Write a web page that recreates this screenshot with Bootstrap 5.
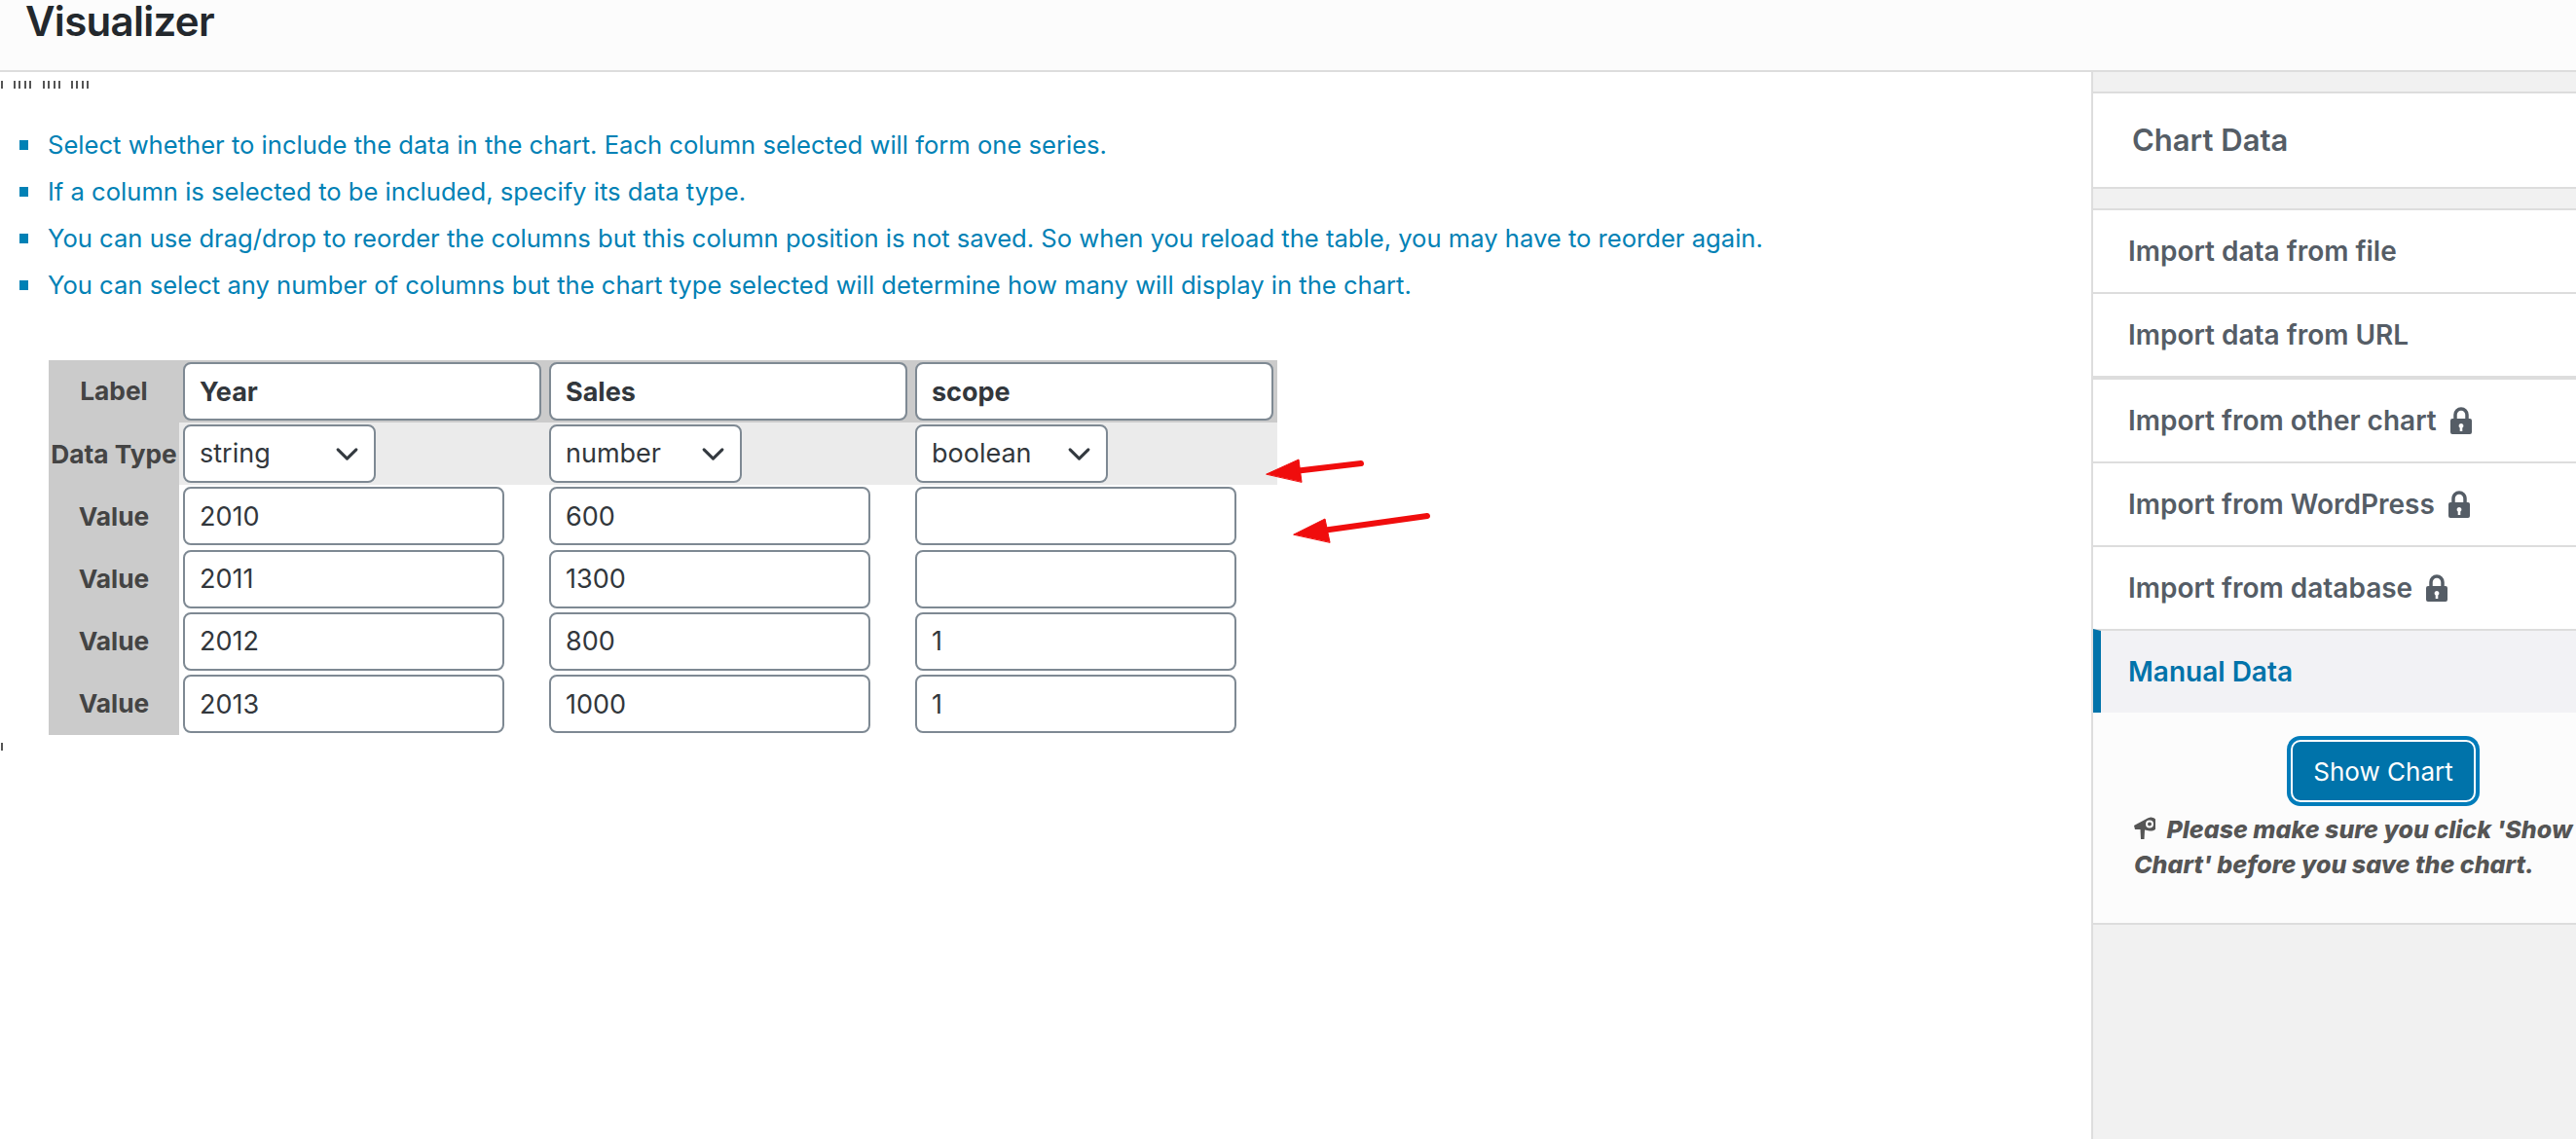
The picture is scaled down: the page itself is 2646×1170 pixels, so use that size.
<!DOCTYPE html>
<html lang="en">
<head>
    <meta charset="UTF-8">
    <title>Visualizer</title>
    <link href="https://cdn.jsdelivr.net/npm/bootstrap@5.3.2/dist/css/bootstrap.min.css" rel="stylesheet">
    <style>
        html, body { height: 100%; overflow: hidden; }
        body { font-family: Inter, "Liberation Sans", sans-serif; background: #fff; color: #32373c; }
        .viz-header { height: 74px; background: #fcfcfc; border-bottom: 2px solid #ddd; padding-left: 26px; }
        .viz-title { font-size: 42px; font-weight: 600; line-height: 44px; letter-spacing: -.7px; color: #23282d; margin: 0; }
        .viz-body { height: 1096px; }
        .viz-main { flex: 0 0 2148px; position: relative; }
        .tick-row { height: 8px; margin-top: 9px; display: block; }
        .tick-end { position: absolute; left: 0; top: 689px; }
        .help-list { list-style: none; margin: 34px 0 53px; padding: 0 0 0 20px; color: #0081b5; font-size: 25.6px; line-height: 48px; }
        .help-list li { display: flex; align-items: center; gap: 20px; }
        .help-list li::before { content: ""; width: 9px; height: 10px; background: #0081b5; flex: none; }
        .series-grid { margin-left: 50px; border-collapse: collapse; table-layout: fixed; width: 1262px; }
        .series-grid td, .series-grid th { height: 64.2px; padding: 0 4px; vertical-align: middle; }
        .series-grid th { width: 134px; padding: 0; background: #cbcbcb; text-align: center; font-size: 26.3px; font-weight: 700; color: #444; white-space: nowrap; }
        .series-grid .label-row td { background: #cbcbcb; }
        .series-grid .type-row td { background: #ebebeb; }
        .grid-input, .grid-input:focus { height: 60px; border: 2px solid #7e8993; border-radius: 8px; padding: 0 15px; font-size: 27px; color: #32373c; box-shadow: none; background-color: #fff; }
        .label-row .grid-input { width: 368px; font-weight: 700; }
        .value-input { width: 330px; }
        .grid-select, .grid-select:focus { width: 198px; padding-right: 40px; background-size: 25px 25px; background-position: right 15px center; }
        .note-arrows { position: absolute; left: 0; top: 0; pointer-events: none; }
        .viz-side { flex: 0 0 598px; background: #f1f1f1; border-left: 2px solid #ddd; padding-top: 20px; }
        .side-heading { height: 100px; background: #fff; border-top: 2px solid #ddd; border-bottom: 2px solid #ddd; margin-bottom: 20px; padding-left: 40px; font-size: 31px; font-weight: 600; color: #555d66; display: flex; align-items: center; }
        .side-item { height: 86px; background: #fff; border-top: 2px solid #ddd; padding-left: 36px; font-size: 28px; font-weight: 600; color: #555d66; display: flex; align-items: center; gap: 14px; }
        .side-item.wide-rule { height: 88px; border-top-width: 4px; }
        .side-item.is-open { height: 86px; background: #f2f2f5; color: #0073aa; padding-left: 28px; border-left: 8px solid #0073aa; }
        .side-panel { height: 218px; background: #fcfcfc; border-bottom: 2px solid #ddd; padding-top: 28px; }
        .show-btn, .show-btn:hover { width: 190px; height: 64px; padding: 0; background: #0073aa; color: #fff; font-size: 26px; border: 2px solid #fff; border-radius: 10px; box-shadow: 0 0 0 4px #007cba; }
        .save-note { margin: 0; padding: 10px 0 0 42px; width: 540px; font-size: 25px; font-style: italic; font-weight: 800; line-height: 36px; color: #555; }
        .save-note svg { vertical-align: -1px; margin-right: 6px; }
    </style>
</head>
<body>
<header class="viz-header">
    <h1 class="viz-title">Visualizer</h1>
</header>
<div class="viz-body d-flex">
    <main class="viz-main">
        <svg class="tick-row" width="100" height="8" fill="#555">
            <rect x="1" width="2" height="8"/><rect x="14" width="2" height="8"/><rect x="19" width="2" height="8"/><rect x="25" width="2" height="8"/><rect x="30" width="2" height="8"/>
            <rect x="44" width="2" height="8"/><rect x="49" width="2" height="8"/><rect x="55" width="2" height="8"/><rect x="60" width="2" height="8"/>
            <rect x="73" width="2" height="8"/><rect x="78" width="2" height="8"/><rect x="84" width="2" height="8"/><rect x="89" width="2" height="8"/>
        </svg>
        <ul class="help-list">
            <li>Select whether to include the data in the chart. Each column selected will form one series.</li>
            <li>If a column is selected to be included, specify its data type.</li>
            <li>You can use drag/drop to reorder the columns but this column position is not saved. So when you reload the table, you may have to reorder again.</li>
            <li>You can select any number of columns but the chart type selected will determine how many will display in the chart.</li>
        </ul>
        <table class="series-grid">
            <tr class="label-row">
                <th>Label</th>
                <td><input class="form-control grid-input" value="Year"></td>
                <td><input class="form-control grid-input" value="Sales"></td>
                <td><input class="form-control grid-input" value="scope"></td>
            </tr>
            <tr class="type-row">
                <th>Data Type</th>
                <td><select class="form-select grid-input grid-select"><option>string</option></select></td>
                <td><select class="form-select grid-input grid-select"><option>number</option></select></td>
                <td><select class="form-select grid-input grid-select"><option>boolean</option></select></td>
            </tr>
            <tr>
                <th>Value</th>
                <td><input class="form-control grid-input value-input" value="2010"></td>
                <td><input class="form-control grid-input value-input" value="600"></td>
                <td><input class="form-control grid-input value-input" value=""></td>
            </tr>
            <tr>
                <th>Value</th>
                <td><input class="form-control grid-input value-input" value="2011"></td>
                <td><input class="form-control grid-input value-input" value="1300"></td>
                <td><input class="form-control grid-input value-input" value=""></td>
            </tr>
            <tr>
                <th>Value</th>
                <td><input class="form-control grid-input value-input" value="2012"></td>
                <td><input class="form-control grid-input value-input" value="800"></td>
                <td><input class="form-control grid-input value-input" value="1"></td>
            </tr>
            <tr>
                <th>Value</th>
                <td><input class="form-control grid-input value-input" value="2013"></td>
                <td><input class="form-control grid-input value-input" value="1000"></td>
                <td><input class="form-control grid-input value-input" value="1"></td>
            </tr>
        </table>
        <svg class="tick-end" width="4" height="8" fill="#555"><rect x="1" width="2" height="8"/></svg>
        <!-- red annotation arrows drawn over the table -->
        <svg class="note-arrows" width="1500" height="520">
            <g fill="#f00d0d" stroke="#f00d0d" stroke-linejoin="round" stroke-linecap="round">
                <path d="M1301 413 L1334 398 L1337 421 Z" stroke-width="1"/>
                <path d="M1334 409.500 L1398 402" stroke-width="6" fill="none"/>
                <path d="M1329 475 L1361 459 L1366 483 Z" stroke-width="1"/>
                <path d="M1362 470.500 L1466 456" stroke-width="6" fill="none"/>
            </g>
        </svg>
    </main>
    <aside class="viz-side">
        <div class="side-heading">Chart Data</div>
        <div class="side-item">Import data from file</div>
        <div class="side-item">Import data from URL</div>
        <div class="side-item wide-rule">Import from other chart
            <svg width="22" height="28" viewBox="0 0 22 28"><path d="M5 13V8a6 6 0 0 1 12 0v5" fill="none" stroke="#555d66" stroke-width="3.500"/><path fill="#555d66" fill-rule="evenodd" d="M2 12h18a2 2 0 0 1 2 2v12a2 2 0 0 1-2 2H2a2 2 0 0 1-2-2V14a2 2 0 0 1 2-2zm9 5a2.500 2.500 0 0 0-1.300 4.600V25h2.600v-3.400A2.500 2.500 0 0 0 11 17z"/></svg>
        </div>
        <div class="side-item">Import from WordPress
            <svg width="22" height="28" viewBox="0 0 22 28"><path d="M5 13V8a6 6 0 0 1 12 0v5" fill="none" stroke="#555d66" stroke-width="3.500"/><path fill="#555d66" fill-rule="evenodd" d="M2 12h18a2 2 0 0 1 2 2v12a2 2 0 0 1-2 2H2a2 2 0 0 1-2-2V14a2 2 0 0 1 2-2zm9 5a2.500 2.500 0 0 0-1.300 4.600V25h2.600v-3.400A2.500 2.500 0 0 0 11 17z"/></svg>
        </div>
        <div class="side-item">Import from database
            <svg width="22" height="28" viewBox="0 0 22 28"><path d="M5 13V8a6 6 0 0 1 12 0v5" fill="none" stroke="#555d66" stroke-width="3.500"/><path fill="#555d66" fill-rule="evenodd" d="M2 12h18a2 2 0 0 1 2 2v12a2 2 0 0 1-2 2H2a2 2 0 0 1-2-2V14a2 2 0 0 1 2-2zm9 5a2.500 2.500 0 0 0-1.300 4.600V25h2.600v-3.400A2.500 2.500 0 0 0 11 17z"/></svg>
        </div>
        <div class="side-item is-open">Manual Data</div>
        <div class="side-panel">
            <div class="text-center"><button class="btn show-btn" type="button">Show Chart</button></div>
            <p class="save-note">
                <svg width="22" height="23" viewBox="0 0 22 23"><path fill="#555" fill-rule="evenodd" d="M0 9 13 2a7 7 0 1 1 3 12.500L11 13.500 10.500 23H7L6.500 13 1 13zM16 3.500a4 4 0 1 0 0 8 4 4 0 0 0 0-8zm0 2a2 2 0 1 1 0 4 2 2 0 0 1 0-4z"/></svg>
                Please make sure you click 'Show Chart' before you save the chart.
            </p>
        </div>
    </aside>
</div>
<script src="https://cdn.jsdelivr.net/npm/bootstrap@5.3.2/dist/js/bootstrap.bundle.min.js"></script>
</body>
</html>
